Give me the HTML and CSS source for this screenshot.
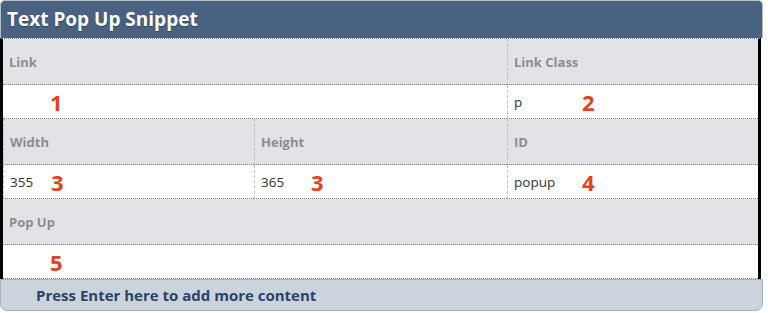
FILE: index.html
```html
<!DOCTYPE html>
<html lang="en">
<head>
    <meta charset="UTF-8">
    <title>Text Pop Up Snippet</title>
    <link rel="stylesheet" href="styles.css">
</head>
<body>
<div class="snippet">
    <div class="snippet-header">Text Pop Up Snippet</div>

    <div class="snippet-grid">
        <!-- row 1 -->
        <div class="cell label span-2">Link</div>
        <div class="cell label">Link Class</div>
        <div class="cell value span-2"><span class="val w1"></span><span class="mark">1</span></div>
        <div class="cell value"><span class="val w3">p</span><span class="mark">2</span></div>

        <!-- row 2 -->
        <div class="cell label">Width</div>
        <div class="cell label">Height</div>
        <div class="cell label">ID</div>
        <div class="cell value"><span class="val w1">355</span><span class="mark">3</span></div>
        <div class="cell value"><span class="val w2">365</span><span class="mark">3</span></div>
        <div class="cell value"><span class="val w3">popup</span><span class="mark">4</span></div>

        <!-- row 3 -->
        <div class="cell label span-3">Pop Up</div>
        <div class="cell value span-3"><span class="val w1"></span><span class="mark">5</span></div>
    </div>

    <div class="snippet-footer">Press Enter here to add more content</div>
</div>
</body>
</html>
```

FILE: styles.css
```css
* { margin: 0; padding: 0; box-sizing: border-box; }
body {
    font-family: 'Open Sans', 'Liberation Sans', sans-serif;
    background: #fff;
}
.snippet { width: 763px; }
.snippet-header {
    height: 38px;
    background: #4a6281;
    border: 1px solid #b9bcc0;
    border-bottom: none;
    border-radius: 5px 5px 0 0;
    color: #fff;
    font-size: 19px;
    font-weight: 700;
    line-height: 36px;
    padding-left: 6px;
    text-shadow: 0 1px 1px rgba(0, 0, 0, 0.35);
}
.snippet-grid {
    display: grid;
    grid-template-columns: 251px 253px 251px;
    width: 761px;
    border-left: 3px solid #000;
    border-right: 3px solid #000;
    border-top: 1px dotted #777;
}
.cell {
    border-bottom: 1px dotted #777;
    display: flex;
    align-items: center;
    padding-left: 6px;
}
.cell + .cell { border-left: 1px dashed #bbb; }
.label.span-2, .value.span-2 { border-left: none; }
.label.span-3, .value.span-3 { border-left: none; }
.span-2 { grid-column: span 2; }
.span-3 { grid-column: span 3; }
.label {
    height: 46px;
    background: #e3e2e7;
    color: #8d8d8f;
    font-size: 13px;
    font-weight: 700;
}
.value {
    height: 34px;
    background: #fff;
    color: #333;
    font-size: 13.5px;
}
.value:first-of-type { border-left: none; }
.val { display: inline-block; }
.w1 { width: 41px; }
.w2 { width: 50px; }
.w3 { width: 68px; }
.mark {
    color: #e2421c;
    font-size: 22px;
    font-weight: 700;
    line-height: 1;
}
.snippet-footer {
    height: 32px;
    background: #cbd3dd;
    border: 1px solid #a7b0bb;
    border-radius: 0 0 7px 7px;
    color: #2c4366;
    font-size: 15px;
    font-weight: 700;
    line-height: 30px;
    padding-left: 35px;
}
```
